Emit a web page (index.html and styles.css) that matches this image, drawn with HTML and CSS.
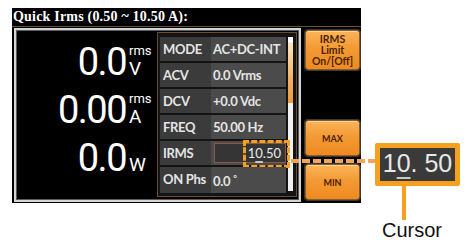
FILE: index.html
```html
<!DOCTYPE html>
<html>
<head>
<meta charset="utf-8">
<link rel="stylesheet" href="styles.css">
</head>
<body>
<div class="stage">
  <div class="panel">
    <div class="title">Quick Irms (0.50 ~ 10.50 A):</div>
    <div class="main">
      <div class="frame">
        <div class="readings">
          <div class="reading"><span class="num">0.0</span><span class="units"><span class="rms">rms</span><span class="unit">V</span></span></div>
          <div class="reading"><span class="num">0.00</span><span class="units"><span class="rms">rms</span><span class="unit">A</span></span></div>
          <div class="reading"><span class="num">0.0</span><span class="units"><span class="rms"></span><span class="unit">W</span></span></div>
        </div>
        <div class="table">
          <div class="rows">
            <div class="row"><div class="lbl">MODE</div><div class="val">AC+DC-INT</div></div>
            <div class="row"><div class="lbl">ACV</div><div class="val">0.0 Vrms</div></div>
            <div class="row"><div class="lbl">DCV</div><div class="val">+0.0 Vdc</div></div>
            <div class="row"><div class="lbl">FREQ</div><div class="val">50.00 Hz</div></div>
            <div class="row"><div class="lbl">IRMS</div><div class="val"><div class="field">1<span class="cur">0</span>.50</div><div class="dash"></div></div></div>
            <div class="row"><div class="lbl">ON Phs</div><div class="val">0.0 <span class="deg">°</span></div></div>
          </div>
          <div class="scroll"><div class="cap"></div><div class="thumb"></div></div>
        </div>
      </div>
      <div class="buttons">
        <div class="btn btn-limit">IRMS<br>Limit<br>On/[Off]</div>
        <div class="btn btn-max">MAX</div>
        <div class="btn btn-min">MIN</div>
      </div>
    </div>
  </div>
  <div class="leader"></div>
  <div class="callout">1<span class="cur">0</span>. 50</div>
  <div class="stem"></div>
  <div class="caption">Cursor</div>
</div>
</body>
</html>
```
FILE: styles.css
```css
html, body {
  margin: 0;
  padding: 0;
  background: #fff;
}
.stage {
  position: relative;
  width: 474px;
  height: 249px;
  overflow: hidden;
}
.panel {
  margin: 8px 0 0 12px;
  width: 349px;
  height: 195px;
  background: #000;
  display: flex;
  flex-direction: column;
}
.title {
  height: 18px;
  line-height: 18px;
  padding-left: 1px;
  font-family: "Liberation Serif", serif;
  font-weight: bold;
  font-size: 14px;
  letter-spacing: 0.2px;
  color: #fff;
  border-bottom: 1px solid #6b5035;
  white-space: nowrap;
}
.main {
  display: flex;
  padding-left: 2px;
}
.frame {
  margin-top: 1px;
  width: 287px;
  height: 174px;
  box-sizing: border-box;
  border: 2px solid #d4d4d4;
  box-shadow: inset 0 0 0 1px #5a5a5a;
  display: flex;
}
.readings {
  width: 141px;
  padding-top: 8px;
  box-sizing: border-box;
}
.reading {
  height: 48px;
  display: flex;
  justify-content: flex-end;
  align-items: center;
  padding-right: 6px;
  color: #fff;
  font-family: Roboto, sans-serif;
}
.num {
  font-weight: 400;
  font-size: 38px;
  line-height: 38px;
  letter-spacing: -1.5px;
}
.units {
  display: flex;
  flex-direction: column;
  justify-content: space-between;
  height: 38px;
  width: 22px;
  padding-left: 3px;
}
.rms {
  font-size: 13px;
  line-height: 13px;
  margin-top: 1px;
  height: 13px;
}
.unit {
  font-weight: 400;
  font-size: 19px;
  line-height: 19px;
  margin-bottom: 3px;
}
.table {
  margin-top: 2px;
  width: 140px;
  height: 165px;
  box-sizing: border-box;
  border: 1px solid #6b4a2e;
  padding: 4px 3px 0 2px;
  display: flex;
  background: #141414;
}
.rows {
  width: 126px;
  display: flex;
  flex-direction: column;
  gap: 2px;
}
.row {
  height: 24px;
  display: grid;
  grid-template-columns: 51px 75px;
  font-family: Lato, sans-serif;
  font-weight: 700;
  font-size: 13px;
  line-height: 24px;
  color: #e4e4e4;
  letter-spacing: -0.3px;
  white-space: nowrap;
}
.lbl {
  background: #3b3b3b;
  padding-left: 3px;
}
.val {
  background: #4b4b4b;
  padding-left: 2px;
  position: relative;
}
.deg {
  font-size: 9px;
  vertical-align: 4px;
}
.field {
  margin: 2px 0 0 1px;
  height: 20px;
  box-sizing: border-box;
  border: 1px solid #8a5a3a;
  background: #353535;
  text-align: right;
  padding-right: 4px;
  line-height: 18px;
  font-weight: 400;
  color: #eaeaea;
  letter-spacing: 0;
}
.cur {
  text-decoration: underline;
  text-decoration-thickness: 2px;
  text-underline-offset: 3px;
  text-decoration-color: #c8c8c8;
}
.dash {
  position: absolute;
  left: 32px;
  top: -1px;
  width: 47px;
  height: 28px;
  box-sizing: border-box;
  border: 3px dashed #f5a020;
}
.scroll {
  margin-left: 2px;
  width: 5px;
  height: 154px;
  background: #f0f0f0;
  display: flex;
  flex-direction: column;
}
.cap {
  height: 5px;
  background: #fff;
  margin-bottom: 1px;
}
.thumb {
  height: 60px;
  background: linear-gradient(#fbe6c0, #f3b060 60%, #ee9a3a);
}
.buttons {
  margin-left: 4px;
  width: 55px;
  display: flex;
  flex-direction: column;
  padding-top: 3px;
}
.btn {
  box-sizing: border-box;
  border: 1px solid #8a5a2a;
  border-radius: 3px;
  box-shadow: 0 0 0 1px #3a3a3a, inset 0 1px 0 #ffd59a;
  background: linear-gradient(#fbb45a, #f39a34 45%, #ee8a20);
  color: #4a2200;
  font-family: Lato, sans-serif;
  font-weight: 700;
  text-align: center;
  display: flex;
  align-items: center;
  justify-content: center;
}
.btn-limit {
  height: 40px;
  font-size: 10.5px;
  line-height: 11px;
}
.btn-max {
  margin-top: 50px;
  height: 36px;
  font-size: 9px;
}
.btn-min {
  margin-top: 8px;
  height: 36px;
  font-size: 9px;
}
.leader {
  position: absolute;
  left: 291px;
  top: 159px;
  width: 84px;
  height: 4px;
  background: repeating-linear-gradient(to right, #f2a55a 0 8px, transparent 8px 11px);
}
.callout {
  position: absolute;
  left: 375px;
  top: 143px;
  width: 85px;
  height: 43px;
  box-sizing: border-box;
  border: 5px solid #f6a01e;
  border-radius: 2px;
  background: #3a3a3a;
  color: #e8e8e8;
  font-family: "Liberation Sans", sans-serif;
  font-size: 25px;
  line-height: 31px;
  text-align: center;
  white-space: pre;
}
.callout .cur {
  text-underline-offset: 5px;
}
.stem {
  position: absolute;
  left: 402px;
  top: 186px;
  width: 4px;
  height: 34px;
  background: #f6a01e;
}
.caption {
  position: absolute;
  left: 382px;
  top: 220px;
  font-family: "Liberation Sans", sans-serif;
  font-size: 20px;
  line-height: 20px;
  color: #111;
}
```
